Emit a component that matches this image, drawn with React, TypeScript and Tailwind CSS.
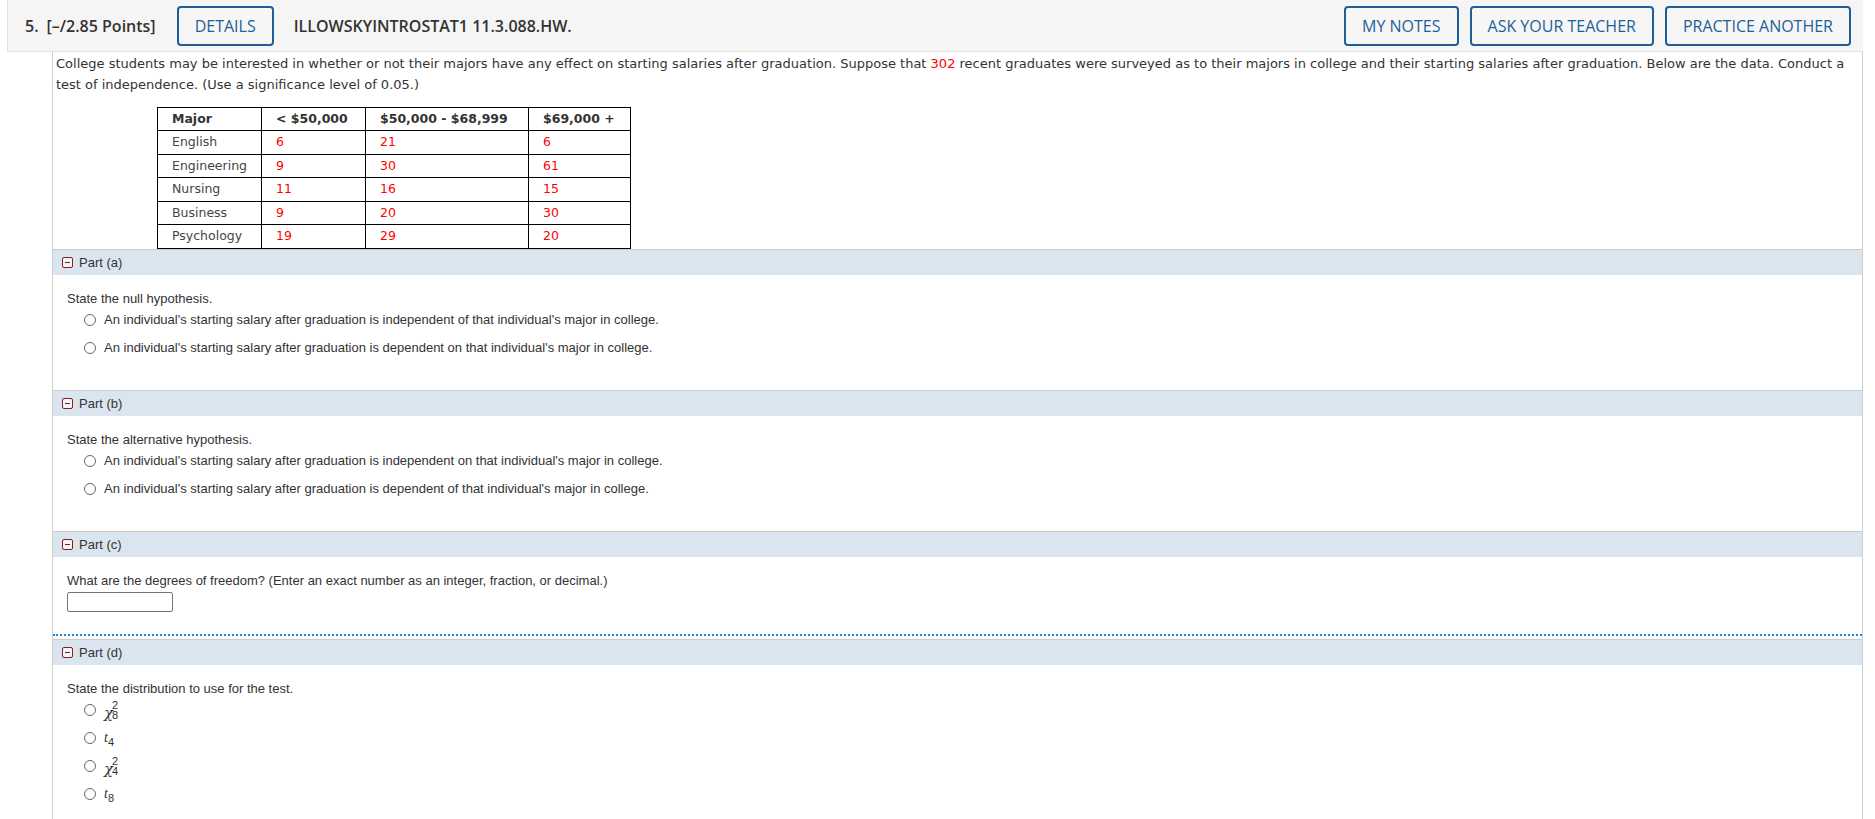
import React from 'react';

const rows = [
  ['English', '6', '21', '6'],
  ['Engineering', '9', '30', '61'],
  ['Nursing', '11', '16', '15'],
  ['Business', '9', '20', '30'],
  ['Psychology', '19', '29', '20'],
];

function HeaderButton({ children }: { children: React.ReactNode }) {
  return (
    <button className="h-[40px] rounded-[4px] border-2 border-[#1f5f95] px-[16px] text-[16px] uppercase text-[#1f5f95] bg-[#f6f6f6]">
      {children}
    </button>
  );
}

function MinusBox() {
  return (
    <span className="flex h-[11px] w-[11px] items-center justify-center rounded-[2px] border border-[#8a1d1d] bg-[#f2f5f8]">
      <span className="h-[1.5px] w-[5px] bg-[#8a1d1d]" />
    </span>
  );
}

function PartHeader({ label }: { label: string }) {
  return (
    <div className="flex h-[26px] items-center gap-[6px] border-t border-[#cbcbcb] bg-[#dae5ef] pl-[9px] text-[13px] text-[#333]">
      <MinusBox />
      <span>Part ({label})</span>
    </div>
  );
}

function Radio() {
  return <span className="h-[12px] w-[12px] shrink-0 rounded-full border border-[#666] bg-white" />;
}

function Option({ children }: { children: React.ReactNode }) {
  return (
    <div className="flex h-[28px] items-center gap-[8px] pl-[31px]">
      <Radio />
      <span className="flex items-center">{children}</span>
    </div>
  );
}

// chi-square with stacked sup/sub, like the MathJax rendering
function Chi({ df }: { df: string }) {
  return (
    <span className="inline-flex items-center">
      <span className="mt-[8px] font-['DejaVu_Serif',serif] text-[15px] italic leading-none">χ</span>
      <span className="-ml-[1px] flex flex-col text-[11px] leading-[10px]">
        <span>2</span>
        <span>{df}</span>
      </span>
    </span>
  );
}

function T({ df }: { df: string }) {
  return (
    <span className="inline-flex items-baseline">
      <span className="font-['Liberation_Serif',serif] text-[14px] italic">t</span>
      <span className="relative top-[4px] text-[11px]">{df}</span>
    </span>
  );
}

export default function App() {
  return (
    <div className="min-h-screen bg-white pl-[7px] pr-[12px]">
      <div className="flex h-[52px] items-center border-b border-l border-[#e2e2e2] bg-[#f5f5f5] pl-[17px] pr-[12px] font-['Open_Sans',sans-serif] text-[#333]">
        <span className="text-[16px] font-semibold">5.</span>
        <span className="ml-[8px] text-[16px] font-semibold">[–/2.85 Points]</span>
        <div className="ml-[21px]">
          <HeaderButton>Details</HeaderButton>
        </div>
        <span className="ml-[20px] text-[16px] font-semibold">ILLOWSKYINTROSTAT1 11.3.088.HW.</span>
        <div className="ml-auto flex gap-[11px]">
          <HeaderButton>My Notes</HeaderButton>
          <HeaderButton>Ask Your Teacher</HeaderButton>
          <HeaderButton>Practice Another</HeaderButton>
        </div>
      </div>

      <div className="ml-[45px] border-l border-r border-[#cfcfcf]">
        <p className="pl-[3px] pr-[6px] pt-[1px] font-['DejaVu_Sans',sans-serif] text-[13px] leading-[21px] text-[#333]">
          College students may be interested in whether or not their majors have any effect on starting salaries after graduation. Suppose that <span className="text-[#f00]">302</span> recent graduates were surveyed as to their majors in college and their starting salaries after graduation. Below are the data. Conduct a test of independence. (Use a significance level of 0.05.)
        </p>

        <table className="ml-[104px] mt-[12px] border-collapse border border-black font-['DejaVu_Sans',sans-serif] text-[12.5px]">
          <thead>
            <tr className="h-[23px] text-left font-bold text-[#333]">
              <th className="w-[104px] border border-black pl-[14px]">Major</th>
              <th className="w-[104px] border border-black pl-[14px]">&lt; $50,000</th>
              <th className="w-[163px] border border-black pl-[14px]">$50,000 - $68,999</th>
              <th className="w-[102px] border border-black pl-[14px]">$69,000 +</th>
            </tr>
          </thead>
          <tbody>
            {rows.map((r) => (
              <tr key={r[0]} className="h-[23.6px]">
                <td className="border border-black pl-[14px] text-[#444]">{r[0]}</td>
                <td className="border border-black pl-[14px] text-[#f00]">{r[1]}</td>
                <td className="border border-black pl-[14px] text-[#f00]">{r[2]}</td>
                <td className="border border-black pl-[14px] text-[#f00]">{r[3]}</td>
              </tr>
            ))}
          </tbody>
        </table>

        <div className="font-['Liberation_Sans',sans-serif] text-[13px] text-[#333]">
          <PartHeader label="a" />
          <div className="pb-[28px] pl-[14px] pt-[16px]">
            <div className="leading-[15px]">State the null hypothesis.</div>
            <div className="-ml-[14px]">
              <Option>An individual's starting salary after graduation is independent of that individual's major in college.</Option>
              <Option>An individual's starting salary after graduation is dependent on that individual's major in college.</Option>
            </div>
          </div>

          <PartHeader label="b" />
          <div className="pb-[28px] pl-[14px] pt-[16px]">
            <div className="leading-[15px]">State the alternative hypothesis.</div>
            <div className="-ml-[14px]">
              <Option>An individual's starting salary after graduation is independent on that individual's major in college.</Option>
              <Option>An individual's starting salary after graduation is dependent of that individual's major in college.</Option>
            </div>
          </div>

          <PartHeader label="c" />
          <div className="pb-[22px] pl-[14px] pt-[16px]">
            <div className="leading-[15px]">What are the degrees of freedom? (Enter an exact number as an integer, fraction, or decimal.)</div>
            <input className="mt-[4px] block h-[20px] w-[106px] rounded-[2px] border border-[#767676] bg-white" />
          </div>
          <div className="mb-[3px] border-t-2 border-dotted border-[#1b86e0]" />

          <PartHeader label="d" />
          <div className="pb-[28px] pl-[14px] pt-[16px]">
            <div className="leading-[15px]">State the distribution to use for the test.</div>
            <div className="-ml-[14px]">
              <Option><Chi df="8" /></Option>
              <Option><T df="4" /></Option>
              <Option><Chi df="4" /></Option>
              <Option><T df="8" /></Option>
            </div>
          </div>
        </div>
      </div>
    </div>
  );
}
